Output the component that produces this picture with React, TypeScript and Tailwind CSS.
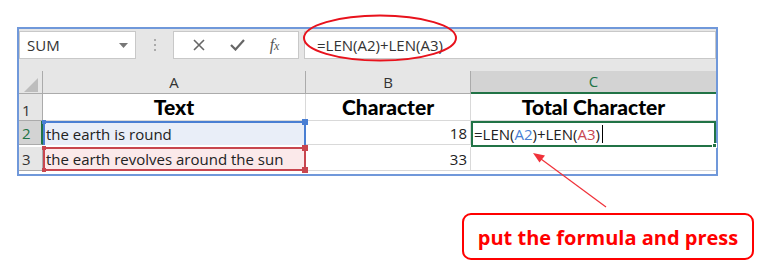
export default function App() {
  const cell = "font-['Open_Sans',sans-serif] text-[15px] leading-[20px] text-[#222]";
  const head = "font-['Lato',sans-serif] font-black text-[21px] leading-[24px] text-black";

  return (
    <div className="relative h-[274px] w-[768px] overflow-hidden bg-white">
      {/* sheet */}
      <div className="ml-[17px] mt-[27px] w-[701px] border-2 border-[#7098da] bg-white">
        {/* formula bar */}
        <div className="flex h-[42px] items-start bg-[#e6e6e6] pt-[2px]">
          <div className="flex h-[28px] w-[117px] items-center justify-between border border-[#c8c8c8] bg-white pl-[7px] pr-[7px] font-['Open_Sans',sans-serif] text-[15px] text-[#333]">
            <span>SUM</span>
            <svg width="9" height="5" viewBox="0 0 9 5">
              <path d="M0 0h9L4.5 5z" fill="#777" />
            </svg>
          </div>
          <div className="flex h-[28px] w-[37px] flex-col items-center justify-center gap-[3px]">
            <span className="h-[2px] w-[2px] bg-[#aaa]" />
            <span className="h-[2px] w-[2px] bg-[#aaa]" />
            <span className="h-[2px] w-[2px] bg-[#aaa]" />
          </div>
          <div className="flex h-[28px] w-[126px] items-center justify-around border border-[#c8c8c8] bg-white px-[6px]">
            <svg width="12" height="12" viewBox="0 0 12 12">
              <path d="M1 1l10 10M11 1L1 11" stroke="#666" strokeWidth="1.6" />
            </svg>
            <svg width="15" height="12" viewBox="0 0 15 12">
              <path d="M1 6l4.5 4.5L14 1" stroke="#666" strokeWidth="2.2" fill="none" />
            </svg>
            <span className="font-['Liberation_Serif',serif] text-[16px] italic text-[#555]">
              f<span className="text-[12px]">x</span>
            </span>
          </div>
          <div className="ml-[5px] flex h-[28px] flex-1 items-center border border-[#c8c8c8] bg-white pl-[12px] font-['Open_Sans',sans-serif] text-[15px] text-[#333]">
            =LEN(A2)+LEN(A3)
          </div>
        </div>

        {/* column headers */}
        <div className="grid grid-cols-[24px_263px_165px_245px] bg-[#e6e6e6] font-['Open_Sans',sans-serif] text-[15px]">
          <div className="relative h-[23px] border-r border-b border-[#ababab]">
            <svg className="absolute bottom-[1px] right-[4px]" width="14" height="14" viewBox="0 0 14 14">
              <path d="M14 0v14H0z" fill="#bdbdbd" />
            </svg>
          </div>
          <div className="flex h-[23px] items-center justify-center border-r border-b border-[#ababab] text-[#333]">A</div>
          <div className="flex h-[23px] items-center justify-center border-r border-b border-[#ababab] text-[#333]">B</div>
          <div className="flex h-[23px] items-center justify-center border-b-2 border-[#217346] bg-[#d3d3d3] text-[#217346]">C</div>
        </div>

        {/* row 1 */}
        <div className="grid grid-cols-[24px_263px_165px_245px]">
          <div className={`flex h-[27px] items-end border-r border-b border-[#ababab] bg-[#e6e6e6] pl-[3px] ${cell} text-[#333]`}>1</div>
          <div className={`flex h-[27px] items-end justify-center border-r border-b border-[#d9d9d9] pb-[1px] ${head}`}>Text</div>
          <div className={`flex h-[27px] items-end justify-center border-r border-b border-[#d9d9d9] pb-[1px] ${head}`}>Character</div>
          <div className={`flex h-[27px] items-end justify-center border-b border-[#d9d9d9] pb-[1px] ${head}`}>Total Character</div>
        </div>

        {/* row 2 */}
        <div className="grid grid-cols-[24px_263px_165px_245px]">
          <div className={`flex h-[24px] items-center border-r-2 border-b border-r-[#217346] border-b-[#ababab] bg-[#d3d3d3] pl-[3px] ${cell} text-[#217346]`}>2</div>
          <div className={`relative flex h-[24px] items-center border-2 border-b-0 border-[#4a7fd3] bg-[#e9eef8] pl-[1px] ${cell}`}>
            the earth is round
            <span className="absolute -right-[4px] -top-[4px] h-[6px] w-[6px] bg-[#4a7fd3]" />
            <span className="absolute -left-[3px] -top-[3px] h-[4px] w-[4px] bg-[#4a7fd3]" />
          </div>
          <div className={`flex h-[24px] items-center justify-end border-r border-b border-[#d9d9d9] pr-[3px] ${cell}`}>18</div>
          <div className={`relative flex h-[26px] items-center border-2 border-[#217346] pl-[1px] ${cell}`}>
            =LEN(<span className="text-[#4a7fd3]">A2</span>)+LEN(<span className="text-[#c8464f]">A3</span>)
            <span className="ml-[2px] h-[18px] w-[1px] bg-black" />
            <span className="absolute -bottom-[3px] -right-[3px] h-[5px] w-[5px] border border-white bg-[#217346]" />
          </div>
        </div>

        {/* row 3 */}
        <div className="grid grid-cols-[24px_263px_165px_245px]">
          <div className={`flex h-[24px] items-center border-r border-b border-[#ababab] bg-[#e6e6e6] pl-[3px] ${cell} text-[#333]`}>3</div>
          <div className={`relative flex h-[24px] items-center border-2 border-[#c8464f] bg-[#fbe9ea] pl-[1px] ${cell}`}>
            the earth revolves around the sun
            <span className="absolute -right-[4px] -top-[4px] h-[6px] w-[6px] bg-[#c8464f]" />
            <span className="absolute -right-[4px] -bottom-[4px] h-[6px] w-[6px] bg-[#c8464f]" />
            <span className="absolute -left-[3px] -top-[3px] h-[4px] w-[4px] bg-[#c8464f]" />
            <span className="absolute -left-[3px] -bottom-[3px] h-[4px] w-[4px] bg-[#c8464f]" />
          </div>
          <div className={`flex h-[24px] items-center justify-end border-r border-b border-[#d9d9d9] pr-[3px] ${cell}`}>33</div>
          <div className="h-[24px] border-b border-[#d9d9d9]" />
        </div>
        <div className="h-[3px]" />
      </div>

      {/* callout */}
      <div className="ml-[462px] mt-[37px] flex h-[47px] w-[292px] items-center justify-center rounded-[9px] border-2 border-[#ff0000] bg-white pt-[2px] font-['Open_Sans',sans-serif] text-[20px] font-bold text-[#ff0000]">
        put the formula and press
      </div>

      {/* annotations */}
      <svg className="pointer-events-none absolute left-0 top-0" width="768" height="274" viewBox="0 0 768 274">
        <ellipse cx="380" cy="38" rx="76" ry="22.5" fill="none" stroke="#e8121c" strokeWidth="2" />
        <path d="M606 207L541 159" stroke="#f0323a" strokeWidth="1.2" />
        <path d="M533 153l12 2.5-5.5 7z" fill="#f0323a" />
      </svg>
    </div>
  );
}
